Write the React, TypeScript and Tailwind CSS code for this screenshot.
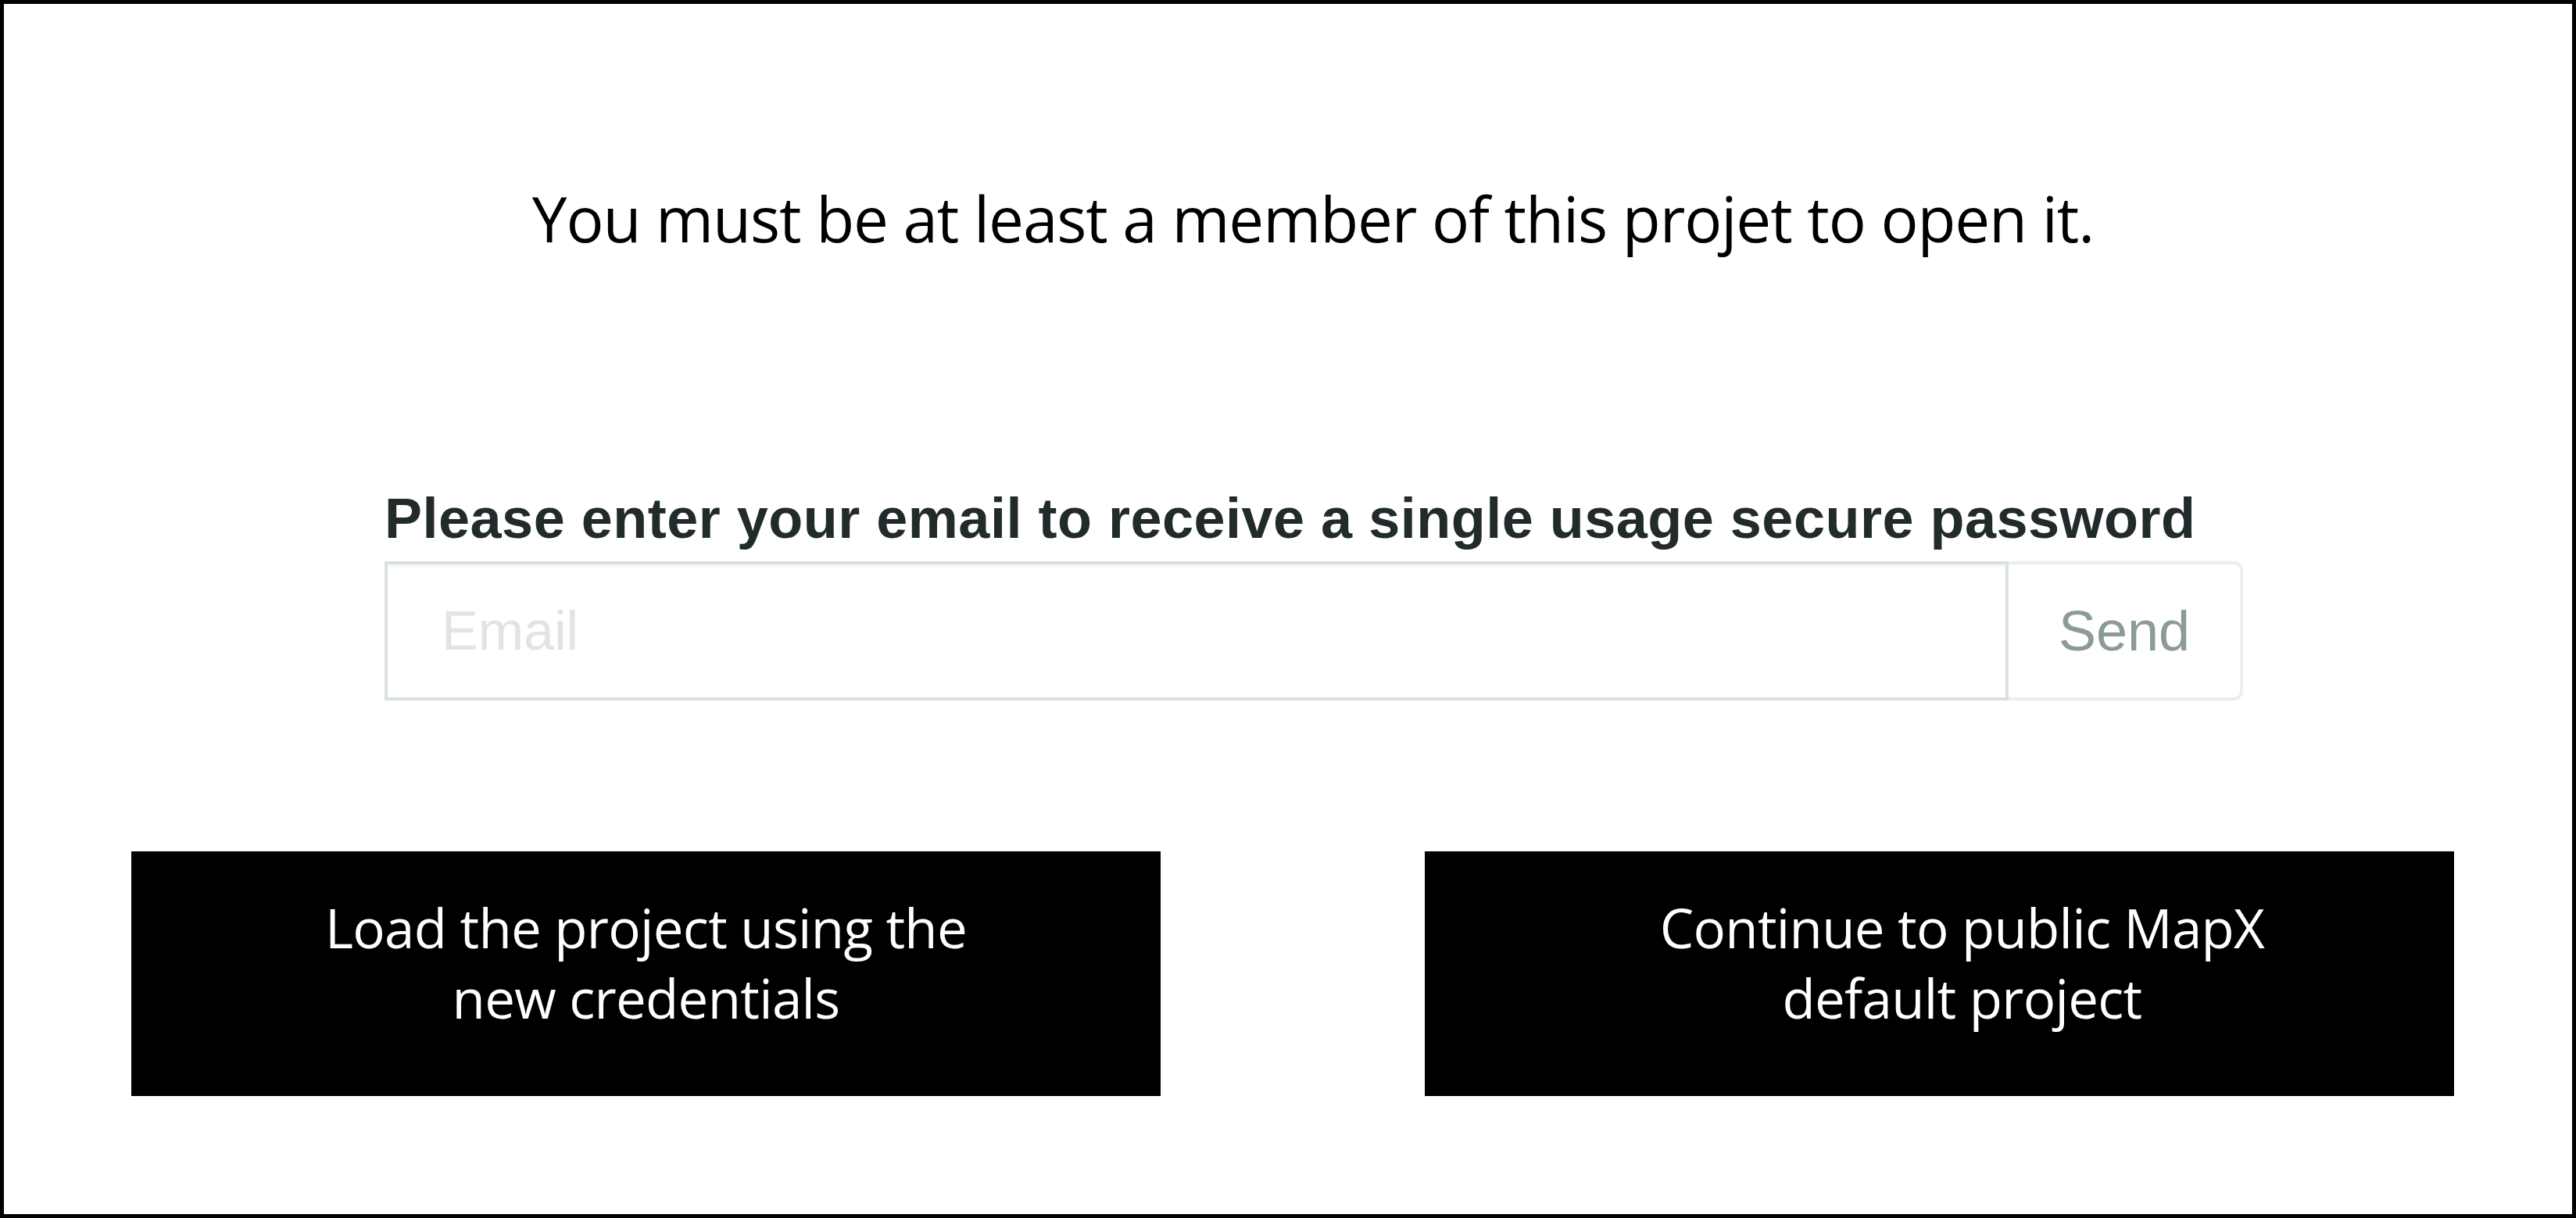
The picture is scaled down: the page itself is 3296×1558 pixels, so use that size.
import React from 'react';

const ActionButton: React.FC<{ lines: string[]; className?: string }> = ({ lines, className = '' }) => (
  <button
    type="button"
    className={`w-[1317px] h-[313px] bg-black text-white flex flex-col items-center pt-[52px] font-['Open_Sans',sans-serif] text-[69px] leading-[90px] tracking-[-0.7px] ${className}`}
  >
    {lines.map(line => (
      <span key={line}>{line}</span>
    ))}
  </button>
);

export default function App() {
  return (
    <div className="w-[3296px] h-[1558px] border-[5px] border-black bg-white flex flex-col">
      {/* Message */}
      <h1 className="mt-[234px] pl-[64px] text-center text-black font-['Open_Sans',sans-serif] text-[80px] leading-none tracking-[-1.1px]">
        You must be at least a member of this projet to open it.
      </h1>

      {/* Email form */}
      <div className="mt-[308px] ml-[487px] w-[2378px] font-['Liberation_Sans',Arial,sans-serif]">
        <p className="text-[72px] leading-none font-bold text-[#222b2b] tracking-[0.5px]">
          Please enter your email to receive a single usage secure password
        </p>
        <div className="mt-[19px] flex h-[178px]">
          <input
            type="email"
            placeholder="Email"
            className="flex-1 min-w-0 border-[4px] border-[#d9e1df] shadow-[inset_0_4px_3px_rgba(0,0,0,0.03)] pl-[69px] text-[70px] text-[#333] placeholder:text-[#e0e5e4] outline-none bg-white"
          />
          <button
            type="button"
            className="w-[300px] border-[4px] border-l-0 border-[#eaefee] rounded-r-[12px] text-[72px] text-[#8a9b9a] bg-white"
          >
            Send
          </button>
        </div>
      </div>

      {/* Actions */}
      <div className="mt-[193px] ml-[163px] flex gap-[338px]">
        <ActionButton lines={['Load the project using the', 'new credentials']} />
        <ActionButton lines={['Continue to public MapX', 'default project']} className="pl-[58px]" />
      </div>
    </div>
  );
}
